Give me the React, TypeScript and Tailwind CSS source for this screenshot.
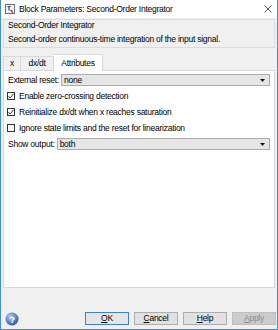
import React from "react";

const Check: React.FC<{ checked?: boolean; label: string }> = ({ checked, label }) => (
  <div className="flex items-center h-[16px] pl-[3px]">
    <div className="w-[8px] h-[8px] border border-[#333] bg-white flex items-center justify-center">
      {checked && (
        <svg width="6" height="6" viewBox="0 0 6 6">
          <path d="M0.5 3.2 L2.2 5 L5.5 0.8" fill="none" stroke="#222" strokeWidth="0.9" />
        </svg>
      )}
    </div>
    <span className="ml-[4px]">{label}</span>
  </div>
);

const Select: React.FC<{ label: string; value: string }> = ({ label, value }) => (
  <div className="flex items-center h-[16px] pl-[4px] pr-[4px] gap-[2px]">
    <span>{label}</span>
    <div className="flex-1 h-[12px] bg-[#e5e5e5] border border-[#acacac] flex items-center pl-[2px] pr-[4px]">
      <span className="flex-1">{value}</span>
      <svg width="5" height="3" viewBox="0 0 5 3">
        <path d="M0 0 H5 L2.5 3 Z" fill="#111" />
      </svg>
    </div>
  </div>
);

const Button: React.FC<{ label: React.ReactNode; primary?: boolean; disabled?: boolean }> = ({ label, primary, disabled }) => (
  <div
    className={`w-[44px] h-[13px] flex items-center justify-center border ${
      primary
        ? "border-[#3c7fd4] bg-[#e5e5e5]"
        : disabled
        ? "border-[#bfbfbf] bg-[#cccccc] text-[#8a8a8a]"
        : "border-[#adadad] bg-[#e1e1e1]"
    }`}
  >
    {label}
  </div>
);

export default function App() {
  return (
    <div
      className="w-[278px] h-[330px] flex flex-col bg-[#f0f0f0] border border-t-0 border-[#3f8fdd] text-[8.5px] tracking-[-0.25px] text-black overflow-hidden"
      style={{ fontFamily: '"Liberation Sans", Arial, sans-serif' }}
    >
      <div className="h-[18px] bg-white flex items-center pl-[4px] pr-[5px] shrink-0">
        <svg width="10" height="10" viewBox="0 0 10 10">
          <rect x="0.5" y="0.5" width="9" height="9" fill="#f4f4f4" stroke="#6d6d6d" />
          <path d="M2.5 2.5 H5.5 M4 2.5 V6.5" stroke="#1e4f96" strokeWidth="1.2" />
          <path d="M5.5 6 L8 8.5" stroke="#c0392b" strokeWidth="1.4" />
        </svg>
        <span className="ml-[4px] flex-1">Block Parameters: Second-Order Integrator</span>
        <svg width="8" height="8" viewBox="0 0 8 8">
          <path d="M0.5 0.5 L7.5 7.5 M7.5 0.5 L0.5 7.5" stroke="#444" strokeWidth="0.9" />
        </svg>
      </div>

      <div className="mx-[2px] mt-[1px] h-[29px] border border-[#dcdcdc] flex flex-col pl-[4px] shrink-0">
        <div className="h-[12px] flex items-end">Second-Order Integrator</div>
        <div className="h-[15px] flex items-center">Second-order continuous-time integration of the input signal.</div>
      </div>

      <div className="mx-[2px] mt-[5px] flex items-end h-[17px] shrink-0">
        <div className="h-[14px] w-[18px] border border-b-0 border-[#d9d9d9] flex items-center justify-center">x</div>
        <div className="h-[14px] w-[33px] border border-b-0 border-l-0 border-[#d9d9d9] flex items-center justify-center">dx/dt</div>
        <div className="h-[17px] w-[49px] border border-b-0 border-l-0 border-[#d9d9d9] bg-white flex items-center justify-center -mb-[1px] relative pt-[1px]">
          Attributes
        </div>
      </div>

      <div className="mx-[2px] h-[218px] bg-white border border-[#d9d9d9] flex flex-col pt-[1px] shrink-0">
        <Select label="External reset:" value="none" />
        <Check checked label="Enable zero-crossing detection" />
        <Check checked label="Reinitialize dx/dt when x reaches saturation" />
        <Check label="Ignore state limits and the reset for linearization" />
        <Select label="Show output:" value="both" />
      </div>

      <div className="flex-1 flex items-end pb-[3px] pl-[4px] pr-[1px]">
        <svg width="14" height="14" viewBox="0 0 14 14">
          <defs>
            <radialGradient id="hg" cx="0.4" cy="0.35" r="0.7">
              <stop offset="0" stopColor="#c9d8f5" />
              <stop offset="0.6" stopColor="#5b7fc9" />
              <stop offset="1" stopColor="#2d4c9a" />
            </radialGradient>
          </defs>
          <circle cx="7" cy="7" r="6.5" fill="url(#hg)" />
          <text x="7" y="10.5" fontSize="9" textAnchor="middle" fill="white" fontWeight="bold" fontFamily="Liberation Sans, sans-serif">
            ?
          </text>
        </svg>
        <div className="flex-1" />
        <div className="flex gap-[5px] mb-[1px]">
          <Button primary label={<span><u>O</u>K</span>} />
          <Button label={<span><u>C</u>ancel</span>} />
          <Button label={<span><u>H</u>elp</span>} />
          <Button disabled label={<span><u>A</u>pply</span>} />
        </div>
      </div>
    </div>
  );
}
